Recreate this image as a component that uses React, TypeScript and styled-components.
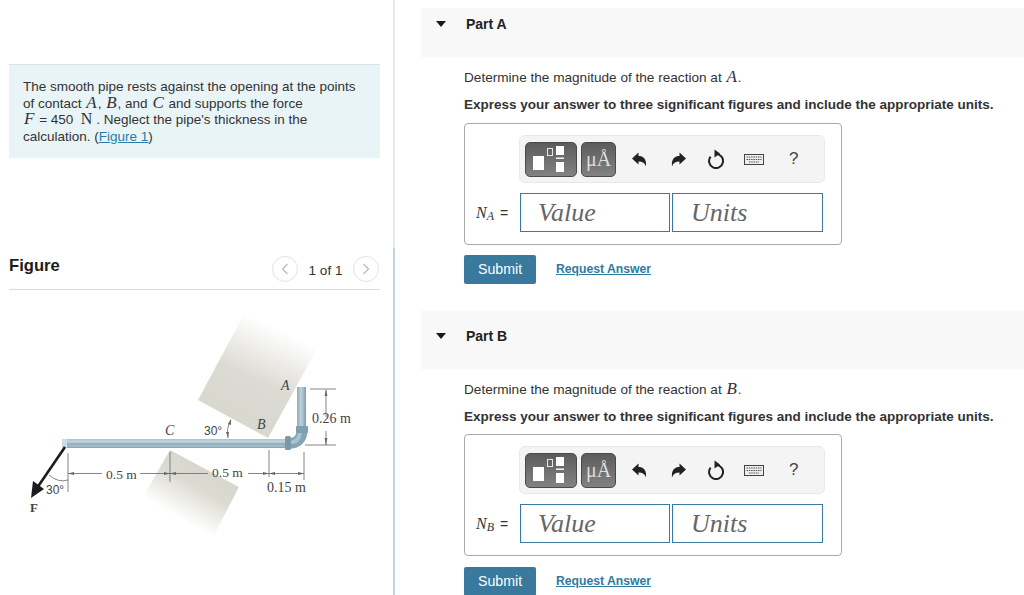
import React from "react";
import styled, { createGlobalStyle } from "styled-components";

const Global = createGlobalStyle`
  html, body { margin: 0; padding: 0; background: #fff; overflow: hidden; }
  body { font-family: "Liberation Sans", Arial, sans-serif; color: #333; }
  #root { height: 595px; }
`;

const Page = styled.div`
  display: flex;
  width: 1024px;
  height: 595px;
  overflow: hidden;
`;

const LeftColumn = styled.div`
  width: 393px;
  flex: none;
  padding: 64px 13px 0 9px;
  box-sizing: border-box;
  display: flex;
  flex-direction: column;
`;

const Divider = styled.div`
  width: 2px;
  flex: none;
  background: linear-gradient(to bottom, #e3e9f0 0, #e3e9f0 248px, #c4d3e6 248px, #c4d3e6 100%);
`;

const RightColumn = styled.div`
  flex: 1;
  padding: 8px 0 0 26px;
  min-width: 0;
`;

const Intro = styled.div`
  height: 94px;
  box-sizing: border-box;
  background: #e9f4f7;
  border-top: 1px solid #d9e2e6;
  padding: 14px 0 0 14px;
  font-size: 13.5px;
  line-height: 16.6px;
  color: #333;
  white-space: nowrap;
`;

const MathVar = styled.span`
  font-family: "Liberation Serif", "Times New Roman", serif;
  font-style: italic;
  font-size: 17px;
  line-height: 14px;
  margin: 0 1px;
`;

const MathUnit = styled.span`
  font-family: "Liberation Serif", "Times New Roman", serif;
  font-size: 16px;
  line-height: 14px;
`;

const Link = styled.a`
  color: #2a7ba8;
  text-decoration: underline;
`;

const FigureHead = styled.div`
  margin-top: 93px;
  height: 39px;
  box-sizing: border-box;
  border-bottom: 1px solid #d9dcde;
  display: flex;
  justify-content: space-between;
  align-items: flex-start;
`;

const FigureTitle = styled.div`
  font-size: 16.6px;
  font-weight: 700;
  line-height: 18px;
  margin-top: 6px;
  color: #1c1c1c;
`;

const Pager = styled.div`
  display: flex;
  align-items: center;
  margin: 5px 1px 0 0;
  font-size: 13.5px;
  color: #333;
`;

const PagerLabel = styled.span`
  width: 55px;
  padding-top: 3px;
  text-align: center;
`;

const PagerButton = styled.div`
  width: 26px;
  height: 26px;
  box-sizing: border-box;
  border: 1px solid #e3e3e3;
  border-radius: 50%;
  display: flex;
  align-items: center;
  justify-content: center;
`;

const Diagram = styled.svg`
  display: block;
  margin: 0 0 0 -9px;
  flex: none;
`;

const PartBlock = styled.section<{ $h: number }>`
  height: ${(p) => p.$h}px;
`;

const PartHeader = styled.div<{ $h: number; $top: number }>`
  height: ${(p) => p.$h}px;
  background: #f8f8f8;
  margin-bottom: 12px;
  display: flex;
  align-items: flex-start;
  padding: ${(p) => p.$top}px 0 0 15px;
  box-sizing: border-box;
  font-size: 14px;
  font-weight: 700;
  line-height: 16px;
  color: #222;
`;

const Caret = styled.span`
  width: 0;
  height: 0;
  margin: 5px 20px 0 0;
  border-left: 5.5px solid transparent;
  border-right: 5.5px solid transparent;
  border-top: 6px solid #1a1a1a;
`;

const PartBody = styled.div`
  padding-left: 43px;
`;

const Question = styled.p`
  margin: 0;
  font-size: 13.6px;
  line-height: 18px;
  color: #333;
  white-space: nowrap;
`;

const Instruction = styled.p`
  margin: 9px 0 0;
  font-size: 13.5px;
  font-weight: 700;
  line-height: 18px;
  color: #333;
  white-space: nowrap;
`;

const AnswerBox = styled.div<{ $gap: number }>`
  margin-top: ${(p) => p.$gap}px;
  width: 378px;
  height: 122px;
  box-sizing: border-box;
  border: 1px solid #aaa;
  border-radius: 4px;
  padding: 11px 0 0 54px;
`;

const Toolbar = styled.div`
  width: 306px;
  height: 48px;
  box-sizing: border-box;
  background: #f4f4f4;
  border: 1px solid #e8e8e8;
  border-radius: 6px;
  display: flex;
  align-items: center;
  padding: 0 0 0 5px;
`;

const TemplateButton = styled.div<{ $w: number }>`
  width: ${(p) => p.$w}px;
  height: 35px;
  margin-right: 4px;
  flex: none;
  box-sizing: border-box;
  border: 1px solid #4a4a4a;
  border-radius: 5px;
  background: linear-gradient(to bottom, #5c5c5c, #828282);
  display: flex;
  align-items: center;
  justify-content: center;
  color: #dedede;
  font-family: "Liberation Serif", serif;
  font-size: 20px;
`;

const ToolIcon = styled.svg<{ $ml: number }>`
  margin-left: ${(p) => p.$ml}px;
  flex: none;
  display: block;
`;

const HelpMark = styled.span`
  margin-left: 25px;
  font-size: 17px;
  color: #444;
`;

const InputRow = styled.div`
  display: flex;
  align-items: center;
  margin-top: 10px;
  margin-left: -43px;
`;

const VarLabel = styled.div`
  width: 44px;
  flex: none;
  box-sizing: border-box;
  font-size: 14px;
  color: #333;
  white-space: nowrap;
`;

const Nvar = styled.span`
  font-family: "Liberation Serif", serif;
  font-style: italic;
  font-size: 16px;
`;

const NSub = styled.sub`
  font-family: "Liberation Serif", serif;
  font-style: italic;
  font-size: 12px;
  line-height: 0;
  vertical-align: -2px;
  margin-right: 2px;
`;

const Field = styled.div<{ $w: number; $mr?: number; $pad: number }>`
  width: ${(p) => p.$w}px;
  height: 39px;
  margin-right: ${(p) => p.$mr ?? 0}px;
  box-sizing: border-box;
  border: 1px solid #3a7b9f;
  box-shadow: inset 1px 0 0 #e4eef3;
  padding-left: ${(p) => p.$pad}px;
  font-family: "Liberation Serif", serif;
  font-style: italic;
  font-size: 26px;
  line-height: 38px;
  color: #666;
`;

const Actions = styled.div<{ $gap: number }>`
  display: flex;
  align-items: center;
  margin-top: ${(p) => p.$gap}px;
`;

const SubmitButton = styled.div`
  width: 72px;
  height: 29px;
  border-radius: 2px;
  background: #38799d;
  color: #fff;
  font-size: 14.2px;
  line-height: 29px;
  text-align: center;
`;

const RequestLink = styled.a`
  margin-left: 20px;
  padding-bottom: 2px;
  font-size: 12.2px;
  font-weight: 700;
  color: #2f7aa3;
  text-decoration: underline;
`;

function ToolbarIcons() {
  return (
    <>
      <TemplateButton $w={52}>
        <svg width="50" height="33" viewBox="1 1 50 33">
          <rect x="8" y="14" width="11" height="14" fill="#fff" />
          <rect x="22.5" y="6.5" width="5" height="7" fill="none" stroke="#e6e6e6" strokeWidth="1" />
          <rect x="31" y="4" width="8" height="9" fill="#fff" />
          <rect x="31" y="15.5" width="8" height="1.4" fill="#fff" />
          <rect x="31" y="20" width="8" height="10" fill="#fff" />
        </svg>
      </TemplateButton>
      <TemplateButton $w={35}>μÅ</TemplateButton>
      <ToolIcon $ml={12} width="15" height="15" viewBox="0 0 15 15">
        <path d="M0 6.5 L6.5 0.5 V4 C11 4 14.8 6.5 14 14.5 C13 11 10.5 9.5 6.5 9.5 V12.5 Z" fill="#222" />
      </ToolIcon>
      <ToolIcon $ml={24} width="15" height="15" viewBox="0 0 15 15">
        <path d="M15 6.5 L8.5 0.5 V4 C4 4 0.2 6.5 1 14.5 C2 11 4.5 9.5 8.5 9.5 V12.5 Z" fill="#222" />
      </ToolIcon>
      <ToolIcon $ml={22} width="16" height="20" viewBox="0 0 16 20">
        <path d="M8 5 A7 7 0 1 1 2.6 7.6" fill="none" stroke="#222" strokeWidth="2" />
        <path d="M6.5 0.5 L12 4.6 L6.5 8.4 Z" fill="#222" />
      </ToolIcon>
      <ToolIcon $ml={20} width="20" height="11" viewBox="0 0 20 11">
        <rect x="0.5" y="0.5" width="19" height="10" fill="#eee" stroke="#444" />
        <path d="M2.5 3 H17.5 M2.5 5.5 H17.5 M5 8 H15" stroke="#555" strokeWidth="1.2" strokeDasharray="1.5 0.8" fill="none" />
      </ToolIcon>
      <HelpMark>?</HelpMark>
    </>
  );
}

type PartProps = {
  name: string;
  point: string;
  blockH: number;
  headH: number;
  headTop: number;
  boxGap: number;
  actionGap: number;
};

function Part({ name, point, blockH, headH, headTop, boxGap, actionGap }: PartProps) {
  return (
    <PartBlock $h={blockH}>
      <PartHeader $h={headH} $top={headTop}>
        <Caret />
        {name}
      </PartHeader>
      <PartBody>
        <Question>
          Determine the magnitude of the reaction at <MathVar>{point}</MathVar>.
        </Question>
        <Instruction>Express your answer to three significant figures and include the appropriate units.</Instruction>
        <AnswerBox $gap={boxGap}>
          <Toolbar>
            <ToolbarIcons />
          </Toolbar>
          <InputRow>
            <VarLabel>
              <Nvar>N</Nvar>
              <NSub>{point}</NSub> =
            </VarLabel>
            <Field $w={150} $mr={2} $pad={17}>Value</Field>
            <Field $w={151} $pad={18}>Units</Field>
          </InputRow>
        </AnswerBox>
        <Actions $gap={actionGap}>
          <SubmitButton>Submit</SubmitButton>
          <RequestLink>Request Answer</RequestLink>
        </Actions>
      </PartBody>
    </PartBlock>
  );
}

function PipeFigure() {
  const serif = '"Liberation Serif", serif';
  return (
    <Diagram width="392" height="305" viewBox="0 290 392 305">
      <defs>
        <linearGradient id="upperFade" gradientUnits="userSpaceOnUse" x1="233" y1="419" x2="277" y2="328">
          <stop offset="0" stopColor="#d9d8cf" />
          <stop offset="0.45" stopColor="#dcdbd3" />
          <stop offset="1" stopColor="#ffffff" />
        </linearGradient>
        <linearGradient id="lowerFade" gradientUnits="userSpaceOnUse" x1="170" y1="450" x2="143" y2="498">
          <stop offset="0" stopColor="#d8d7cd" />
          <stop offset="0.35" stopColor="#dcdbd2" />
          <stop offset="1" stopColor="#ffffff" />
        </linearGradient>
        <linearGradient id="pipeH" x1="0" y1="0" x2="0" y2="1">
          <stop offset="0" stopColor="#a9c0cb" />
          <stop offset="0.3" stopColor="#c2d6df" />
          <stop offset="0.55" stopColor="#8faab8" />
          <stop offset="0.8" stopColor="#a8c2ce" />
          <stop offset="1" stopColor="#7f9dac" />
        </linearGradient>
        <linearGradient id="pipeV" x1="0" y1="0" x2="1" y2="0">
          <stop offset="0" stopColor="#8fabb9" />
          <stop offset="0.45" stopColor="#bdd3dd" />
          <stop offset="1" stopColor="#7f9dac" />
        </linearGradient>
      </defs>

      <polygon points="198,400 243,316 318,347 268,438" fill="url(#upperFade)" />
      <polygon points="170,450 239,487 213,537 143,497" fill="url(#lowerFade)" />

      <g stroke="#666" strokeWidth="0.8" fill="none">
        <path d="M68 453 V492 M170 452 V482 M269 450 V477 M304 452 V480" />
        <path d="M68 473.5 H102 M140 473.5 H208 M248 473.5 H304" />
        <path d="M310 389 H336 M305 445 H336 M326 390 V417 M326 431 V445" />
        <path d="M49 475 Q58 483 68 480" />
        <path d="M228 438 Q226 428 231 420" />
      </g>
      <g fill="#666">
        <path d="M68 473.5 L74 472 V475 Z M170 473.5 L164 472 V475 Z M170 473.5 L176 472 V475 Z M269 473.5 L263 472 V475 Z M269 473.5 L275 472 V475 Z M304 473.5 L298 472 V475 Z" />
        <path d="M326 389 L324.6 396 H327.4 Z M326 445 L324.6 438 H327.4 Z" />
        <path d="M231 419 L228 424 L231 425 Z M228 438 L226 432 L229 432 Z" />
      </g>

      <rect x="62" y="439" width="224" height="9" fill="url(#pipeH)" />
      <rect x="62" y="439" width="5" height="9" fill="#c9dbe3" />
      <rect x="297" y="387" width="9" height="40" fill="url(#pipeV)" />
      <path d="M288 443.5 Q302 443.5 302 430" fill="none" stroke="#86a5b4" strokeWidth="11" />
      <path d="M289 442.5 Q300 442.5 300 431" fill="none" stroke="#a9c4d0" strokeWidth="3.5" />
      <rect x="296" y="426" width="12" height="7" rx="1" fill="#7f9fae" />
      <rect x="285" y="436" width="6" height="14" rx="1.5" fill="#7a9aa9" />

      <path d="M65 447 L37 488" stroke="#1c1c1c" strokeWidth="2.6" fill="none" />
      <path d="M31 498 L33 481 L44 489 Z" fill="#1c1c1c" />

      <g fontFamily={serif} fill="#444" fontSize="13.5">
        <text x="106" y="479">0.5 m</text>
        <text x="212" y="477">0.5 m</text>
        <text x="267" y="492" fontSize="14">0.15 m</text>
        <text x="312" y="423" fontSize="14">0.26 m</text>
        <text x="204" y="435" fontSize="12" fontFamily='"Liberation Sans", sans-serif'>30°</text>
        <text x="46" y="494" fontSize="12" fontFamily='"Liberation Sans", sans-serif'>30°</text>
        <text x="30" y="512" fontWeight="700" fontSize="13">F</text>
        <text x="165" y="435" fontStyle="italic" fontSize="14">C</text>
        <text x="257" y="429" fontStyle="italic" fontSize="14">B</text>
        <text x="281" y="390" fontStyle="italic" fontSize="14">A</text>
      </g>
    </Diagram>
  );
}

export default function App() {
  return (
    <Page>
      <Global />
      <LeftColumn>
        <Intro>
          The smooth pipe rests against the opening at the points
          <br />
          of contact <MathVar>A</MathVar>, <MathVar>B</MathVar>, and <MathVar>C</MathVar> and supports the force
          <br />
          <MathVar>F</MathVar> = 450 &nbsp;<MathUnit>N</MathUnit> . Neglect the pipe's thickness in the
          <br />
          calculation. (<Link>Figure 1</Link>)
        </Intro>
        <FigureHead>
          <FigureTitle>Figure</FigureTitle>
          <Pager>
            <PagerButton>
              <svg width="10" height="14" viewBox="0 0 10 14">
                <path d="M7.5 2 L2.5 7 L7.5 12" fill="none" stroke="#bbb" strokeWidth="1.3" />
              </svg>
            </PagerButton>
            <PagerLabel>1 of 1</PagerLabel>
            <PagerButton>
              <svg width="10" height="14" viewBox="0 0 10 14">
                <path d="M2.5 2 L7.5 7 L2.5 12" fill="none" stroke="#bbb" strokeWidth="1.3" />
              </svg>
            </PagerButton>
          </Pager>
        </FigureHead>
        <PipeFigure />
      </LeftColumn>
      <Divider />
      <RightColumn>
        <Part name="Part A" point="A" blockH={303} headH={49} headTop={8} boxGap={9} actionGap={10} />
        <Part name="Part B" point="B" blockH={312} headH={58} headTop={17} boxGap={8} actionGap={11} />
      </RightColumn>
    </Page>
  );
}
